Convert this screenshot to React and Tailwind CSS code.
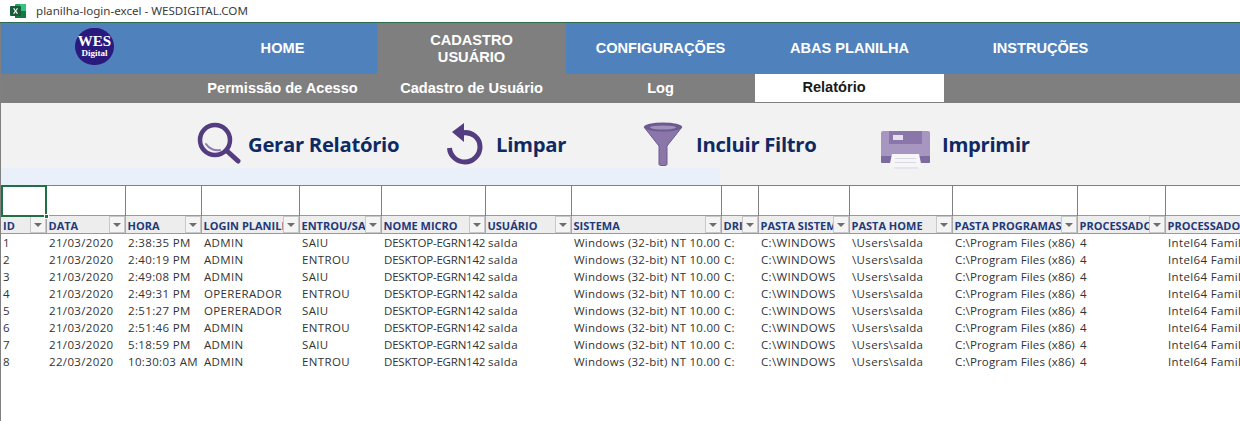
import React from 'react';

// largura de cada coluna da planilha
const COLUNAS = [
  { nome: 'ID', w: 45 },
  { nome: 'DATA', w: 79 },
  { nome: 'HORA', w: 76 },
  { nome: 'LOGIN PLANILHA', w: 98 },
  { nome: 'ENTROU/SAIU', w: 82 },
  { nome: 'NOME MICRO', w: 104 },
  { nome: 'USUÁRIO', w: 86 },
  { nome: 'SISTEMA', w: 150 },
  { nome: 'DRIVE', w: 37 },
  { nome: 'PASTA SISTEMA', w: 91 },
  { nome: 'PASTA HOME', w: 103 },
  { nome: 'PASTA PROGRAMAS', w: 125 },
  { nome: 'PROCESSADOR', w: 88 },
  { nome: 'PROCESSADOR', w: 110 },
];

const LOGS = [
  [1, '21/03/2020', '2:38:35 PM', 'ADMIN', 'SAIU'],
  [2, '21/03/2020', '2:40:19 PM', 'ADMIN', 'ENTROU'],
  [3, '21/03/2020', '2:49:08 PM', 'ADMIN', 'SAIU'],
  [4, '21/03/2020', '2:49:31 PM', 'OPERERADOR', 'ENTROU'],
  [5, '21/03/2020', '2:51:27 PM', 'OPERERADOR', 'SAIU'],
  [6, '21/03/2020', '2:51:46 PM', 'ADMIN', 'ENTROU'],
  [7, '21/03/2020', '5:18:59 PM', 'ADMIN', 'SAIU'],
  [8, '22/03/2020', '10:30:03 AM', 'ADMIN', 'ENTROU'],
];

const FIXOS = ['DESKTOP-EGRN142', 'salda', 'Windows (32-bit) NT 10.00', 'C:', 'C:\\WINDOWS', '\\Users\\salda', 'C:\\Program Files (x86)', '4', 'Intel64 Family 6 Model'];

function IconeExcel() {
  return (
    <svg width="16" height="16" viewBox="0 0 16 16">
      <rect x="5" y="1" width="11" height="14" rx="1" fill="#21a366" />
      <rect x="10" y="1" width="6" height="7" fill="#33c481" />
      <rect x="5" y="8" width="11" height="7" fill="#107c41" />
      <rect x="0" y="3" width="11" height="10" rx="1" fill="#185c37" />
      <path d="M3 5.2h1.4l1.2 2 1.2-2H8.100L6.300 8l1.800 2.800H6.700L5.600 8.900 4.400 10.800H3L4.800 8z" fill="#fff" />
    </svg>
  );
}

function IconeLupa() {
  return (
    <svg width="44" height="44" viewBox="0 0 44 44" fill="none">
      <circle cx="18" cy="18" r="15" stroke="#533c7f" strokeWidth="4.500" />
      <path d="M30 29l11 10" stroke="#533c7f" strokeWidth="5" strokeLinecap="round" />
      <path d="M9 22c3 5 9 7 14 6" stroke="#8f7cae" strokeWidth="2" strokeLinecap="round" />
    </svg>
  );
}

function IconeLimpar() {
  return (
    <svg width="36" height="44" viewBox="0 0 36 42" fill="none">
      <path d="M15 10c10-2 18 5 18 14 0 8-7 15-15 15S3 33 2.500 25" stroke="#533c7f" strokeWidth="5" />
      <path d="M17 0L5 9l12 10z" fill="#533c7f" />
    </svg>
  );
}

function IconeFiltro() {
  return (
    <svg width="40" height="44" viewBox="0 0 40 44">
      <path d="M1 5L16 24v18c0 1 1 1.500 2 1.500h4c1 0 2-.5 2-1.500V24L39 5z" fill="#8a76a8" stroke="#6d5a90" strokeWidth="1" />
      <ellipse cx="20" cy="5" rx="19" ry="4.500" fill="#6d5a90" />
      <ellipse cx="20" cy="5.500" rx="13" ry="2" fill="#a090bc" />
    </svg>
  );
}

function IconeImprimir() {
  return (
    <svg width="49" height="40" viewBox="0 0 49 40">
      <rect x="0" y="0" width="49" height="32" rx="2" fill="#a796c0" />
      <rect x="8" y="0" width="33" height="13" rx="1" fill="#8a76a8" />
      <rect x="12" y="4" width="10" height="5" fill="#e6e0ee" />
      <rect x="0" y="25" width="49" height="7" rx="1" fill="#7d6a9e" />
      <path d="M11 23h27l3 14H8z" fill="#f6f5f8" />
      <rect x="14" y="27" width="21" height="1" fill="#dcd8e2" />
      <rect x="14" y="31" width="21" height="1" fill="#dcd8e2" />
      <rect x="13" y="36" width="24" height="2" fill="#e6e3ea" />
    </svg>
  );
}

function Acao({ icone, texto, largura, gap }) {
  return (
    <div className={`flex items-center ${largura}`}>
      <div className={`flex items-center ${gap}`}>{icone}</div>
      <span className="text-[20.300px] font-bold text-[#0f2a63] tracking-[-0.3px] whitespace-nowrap">{texto}</span>
    </div>
  );
}

function CelulaCabecalho({ nome }) {
  return (
    <th className="p-0 h-[17px] border-l border-[#a8a8a8] first:border-l-0 bg-[#ededed] border-b border-b-[#9a9a9a]">
      <div className="flex h-[17px] items-stretch overflow-hidden">
        <span className="flex-1 min-w-0 overflow-hidden whitespace-nowrap pl-[2px] text-left text-[11px] leading-[20px] font-bold text-[#1f3a7a]">{nome}</span>
        <span className="w-[16px] shrink-0 bg-[#f4f4f4] border border-[#c8c8c8] flex items-center justify-center">
          <span className="w-0 h-0 border-l-[4px] border-r-[4px] border-t-[4px] border-l-transparent border-r-transparent border-t-[#6e6e6e]" />
        </span>
      </div>
    </th>
  );
}

export default function App() {
  return (
    <div className="w-[1240px] h-[421px] overflow-hidden bg-white font-['Open_Sans','Liberation_Sans',sans-serif]">
      {/* barra de título */}
      <div className="h-[22px] flex items-center pl-[10px] gap-[10px] text-[11.600px] text-[#3c3c3c]">
        <IconeExcel />
        <span className="font-['Noto_Sans',sans-serif]">planilha-login-excel - WESDIGITAL.COM</span>
      </div>
      <div className="h-[1px] bg-[#2e6b4d]" />

      <div className="border-l border-[#808080] h-[398px] relative">
        {/* menu principal */}
        <nav className="h-[51px] bg-[#4f81bd] flex font-['Liberation_Sans',sans-serif] font-bold text-white text-[14.600px] leading-[17px] text-center">
          <div className="w-[187px] flex items-center justify-center">
            <div className="w-[39px] h-[37px] -mt-[5px] rounded-full bg-[#2b1a7d] flex flex-col items-center justify-center font-['Liberation_Serif',serif]">
              <span className="text-[15px] leading-[13px] font-bold">WES</span>
              <span className="text-[9px] leading-[10px] font-bold">Digital</span>
            </div>
          </div>
          <div className="w-[189px] flex items-center justify-center">HOME</div>
          <div className="w-[189px] flex items-center justify-center bg-[#7f7f7f]">CADASTRO<br />USUÁRIO</div>
          <div className="w-[189px] flex items-center justify-center">CONFIGURAÇÕES</div>
          <div className="w-[189px] flex items-center justify-center">ABAS PLANILHA</div>
          <div className="w-[193px] flex items-center justify-center">INSTRUÇÕES</div>
        </nav>

        {/* submenu */}
        <div className="h-[29px] bg-[#7f7f7f] flex font-['Liberation_Sans',sans-serif] font-bold text-white text-[14.600px]">
          <div className="w-[187px]" />
          <div className="w-[189px] flex items-center justify-center">Permissão de Acesso</div>
          <div className="w-[189px] flex items-center justify-center">Cadastro de Usuário</div>
          <div className="w-[189px] flex items-center justify-center">Log</div>
          <div className="w-[189px] h-[28px] pr-[31px] flex items-center justify-center bg-white text-[#1a1a1a]">Relatório</div>
        </div>

        {/* botões */}
        <div className="h-[82px] bg-[#f2f2f2]">
          <div className="h-[65px] pt-[17px] flex items-center pl-[196px]">
            <Acao icone={<IconeLupa />} texto="Gerar Relatório" largura="w-[250px]" gap="mr-[7px]" />
            <Acao icone={<IconeLimpar />} texto="Limpar" largura="w-[196px]" gap="mr-[13px]" />
            <Acao icone={<IconeFiltro />} texto="Incluir Filtro" largura="w-[238px]" gap="mr-[13px]" />
            <Acao icone={<div className="mt-[14px]"><IconeImprimir /></div>} texto="Imprimir" largura="w-[200px]" gap="mr-[12px]" />
          </div>
          <div className="h-[17px] w-[719px] bg-[#eaf0f9]" />
        </div>

        {/* planilha */}
        <table className="table-fixed border-collapse w-[1264px]">
          <colgroup>
            {COLUNAS.map((c, i) => (
              <col key={i} style={{ width: c.w }} />
            ))}
          </colgroup>
          <thead>
            <tr className="h-[30px] border-t border-[#808080]">
              {COLUNAS.map((c, i) => (
                <td key={i} className="p-0 border-l border-[#808080] first:border-l-0" />
              ))}
            </tr>
            <tr className="border-t border-[#9a9a9a]">
              {COLUNAS.map((c, i) => (
                <CelulaCabecalho key={i} nome={c.nome} />
              ))}
            </tr>
          </thead>
          <tbody>
            {LOGS.map((linha) => (
              <tr key={linha[0]} className="h-[17px]">
                {[...linha, ...FIXOS].map((v, i) => (
                  <td key={i} className={`p-0 pl-[3px] first:pl-[2px] text-[11.500px] leading-[17px] text-[#333] whitespace-nowrap overflow-hidden ${i === 5 ? 'tracking-[-0.2px]' : i === 7 ? 'tracking-[0.25px]' : i === 11 ? 'tracking-[0.15px]' : 'tracking-[0.35px]'}`}>
                    {v}
                  </td>
                ))}
              </tr>
            ))}
          </tbody>
        </table>

        {/* célula selecionada */}
        <div className="absolute left-0 top-[162px] w-[46px] h-[32px] border-2 border-[#1f7145]" />
        <div className="absolute left-[43px] top-[191px] w-[5px] h-[5px] bg-[#1f7145] border border-white" />
      </div>
    </div>
  );
}
